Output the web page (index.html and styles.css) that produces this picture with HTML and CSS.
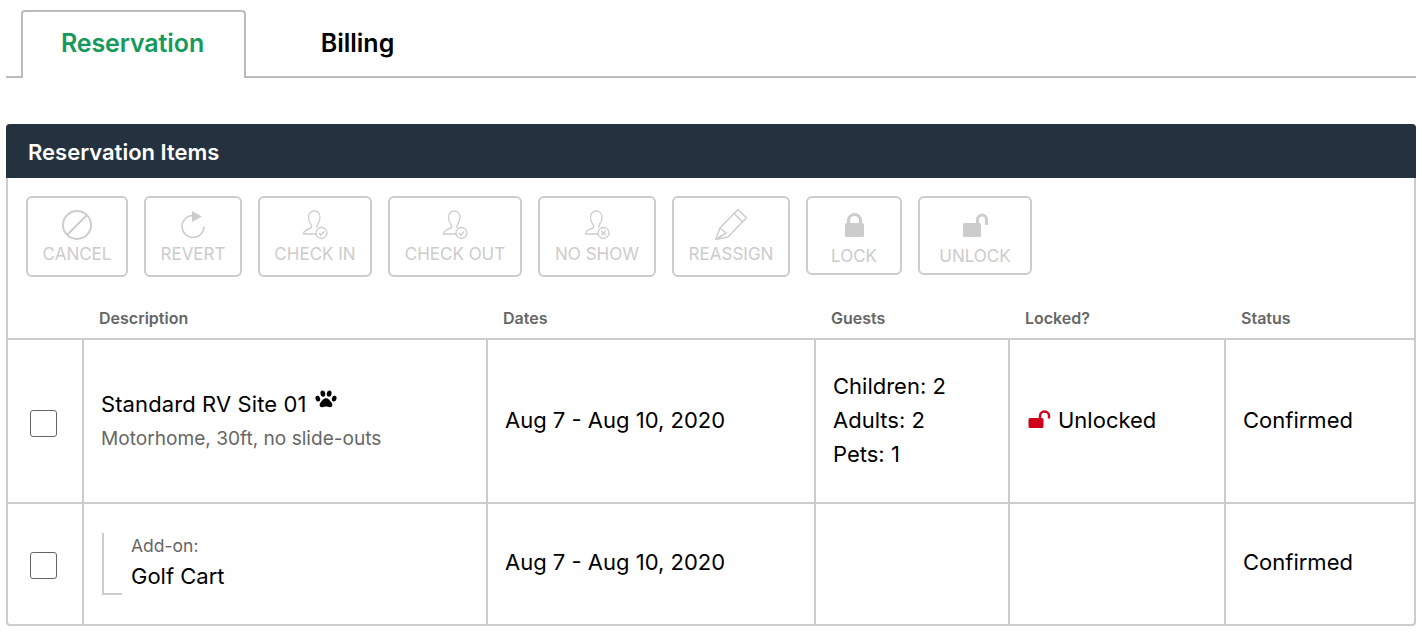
FILE: index.html
```html
<!DOCTYPE html>
<html lang="en">
<head>
<meta charset="utf-8">
<title>Reservation</title>
<link rel="stylesheet" href="styles.css">
</head>
<body>
<nav class="tabs">
  <div class="tab tab-active">Reservation</div>
  <div class="tab tab-plain">Billing</div>
</nav>
<section class="panel">
  <h2 class="panel-title">Reservation Items</h2>
  <div class="toolbar">
    <button class="tool tool-cancel"><svg class="ico" width="32" height="32" viewBox="0 0 32 32"><circle cx="16" cy="17" r="14" fill="none" stroke="currentColor" stroke-width="2"/><path d="M6 27L26 7" stroke="currentColor" stroke-width="2"/></svg>CANCEL</button>
    <button class="tool tool-revert"><svg class="ico" width="32" height="32" viewBox="0 0 32 32"><path d="M16 7.500A11 11 0 1 0 27 18.500" fill="none" stroke="currentColor" stroke-width="1.500"/><path d="M15 3l10 5.500L15 14z" fill="currentColor"/></svg>REVERT</button>
    <button class="tool tool-in"><svg class="ico" width="32" height="32" viewBox="0 0 32 32"><path d="M17 26H4.500C4.500 24 5.500 23 7 22.200L11.500 20.200C13 19.400 13 18 12 16.500 10.500 14.500 9.500 12 9.500 9 9.500 5.500 12 3 15.200 3 18.500 3 21 5.500 21 9 21 12 20 14.500 18.500 16.500 17.500 18 17.500 18.500 18 19.800" fill="none" stroke="currentColor" stroke-width="1.300"/><circle cx="22.500" cy="25" r="5.500" fill="none" stroke="currentColor" stroke-width="1.300"/><path d="M19.800 25l2 2 3.500-3.800" fill="none" stroke="currentColor" stroke-width="1.300"/></svg>CHECK IN</button>
    <button class="tool tool-out"><svg class="ico" width="32" height="32" viewBox="0 0 32 32"><path d="M17 26H4.500C4.500 24 5.500 23 7 22.200L11.500 20.200C13 19.400 13 18 12 16.500 10.500 14.500 9.500 12 9.500 9 9.500 5.500 12 3 15.200 3 18.500 3 21 5.500 21 9 21 12 20 14.500 18.500 16.500 17.500 18 17.500 18.500 18 19.800" fill="none" stroke="currentColor" stroke-width="1.300"/><circle cx="22.500" cy="25" r="5.500" fill="none" stroke="currentColor" stroke-width="1.300"/><path d="M19.800 25l2 2 3.500-3.800" fill="none" stroke="currentColor" stroke-width="1.300"/></svg>CHECK OUT</button>
    <button class="tool tool-noshow"><svg class="ico" width="32" height="32" viewBox="0 0 32 32"><path d="M17 26H4.500C4.500 24 5.500 23 7 22.200L11.500 20.200C13 19.400 13 18 12 16.500 10.500 14.500 9.500 12 9.500 9 9.500 5.500 12 3 15.200 3 18.500 3 21 5.500 21 9 21 12 20 14.500 18.500 16.500 17.500 18 17.500 18.500 18 19.800" fill="none" stroke="currentColor" stroke-width="1.300"/><circle cx="22.500" cy="25" r="5.500" fill="none" stroke="currentColor" stroke-width="1.300"/><path d="M20.200 22.700l4.600 4.600M24.800 22.700l-4.600 4.600" fill="none" stroke="currentColor" stroke-width="1.300"/></svg>NO SHOW</button>
    <button class="tool tool-reassign"><svg class="ico" width="32" height="32" viewBox="0 0 32 32"><path d="M.8 31.500L5 20 23 1.500l8.500 8.200L13 29zM5 20l6 5-8 5M19 5.500l8.500 8.200" fill="none" stroke="currentColor" stroke-width="1.500" stroke-linejoin="round"/></svg>REASSIGN</button>
    <button class="tool tool-lock"><svg class="ico" width="32" height="32" viewBox="0 0 32 32"><rect x="7" y="15" width="19" height="14" rx="1.500" fill="currentColor"/><path d="M10.500 16v-3.500a6 6 0 0 1 12 0V16" fill="none" stroke="currentColor" stroke-width="3"/></svg><span class="tool-label-low">LOCK</span></button>
    <button class="tool tool-unlock"><svg class="ico" width="32" height="32" viewBox="0 0 32 32"><rect x="4" y="15" width="18" height="14" rx="1.500" fill="currentColor"/><path d="M18.500 16v-4.500a4.500 4.500 0 0 1 9 0V17" fill="none" stroke="currentColor" stroke-width="3"/></svg><span class="tool-label-low">UNLOCK</span></button>
  </div>
  <div class="grid">
    <div class="head"></div>
    <div class="head">Description</div>
    <div class="head">Dates</div>
    <div class="head">Guests</div>
    <div class="head">Locked?</div>
    <div class="head">Status</div>

    <div class="cell cell-first row-a"><span class="check"></span></div>
    <div class="cell row-a">
      <div class="site-name">Standard RV Site 01
        <svg class="paw" width="22" height="20" viewBox="0 0 24 22"><ellipse cx="3" cy="9.500" rx="2.500" ry="3.200" transform="rotate(-18 3 9.500)"/><ellipse cx="8.500" cy="4" rx="2.600" ry="3.500" transform="rotate(-8 8.500 4)"/><ellipse cx="15.500" cy="4" rx="2.600" ry="3.500" transform="rotate(8 15.500 4)"/><ellipse cx="21" cy="9.500" rx="2.500" ry="3.200" transform="rotate(18 21 9.500)"/><path d="M12 9c3 0 4.500 3 6 4.700 1.500 1.700 1.600 5-1.600 5.300-1.800.1-2.800-.8-4.400-.8s-2.600.9-4.400.8C4.400 18.700 4.500 15.400 6 13.700 7.500 12 9 9 12 9z"/></svg>
      </div>
      <div class="site-sub">Motorhome, 30ft, no slide-outs</div>
    </div>
    <div class="cell cell-mid row-a">Aug 7 - Aug 10, 2020</div>
    <div class="cell cell-mid row-a guests"><div>Children: 2</div><div>Adults: 2</div><div>Pets: 1</div></div>
    <div class="cell cell-mid row-a"><div class="locked"><svg width="24" height="20" viewBox="0 0 24 20"><path d="M2 8h12a1.500 1.500 0 0 1 1.500 1.500v7a1.500 1.500 0 0 1-1.500 1.500H2a1.500 1.500 0 0 1-1.500-1.500v-7A1.500 1.500 0 0 1 2 8z" fill="#d0021b"/><path d="M12 8V6a4.500 4.500 0 0 1 9 0v2.500" fill="none" stroke="#d0021b" stroke-width="2.400"/></svg>Unlocked</div></div>
    <div class="cell cell-mid row-a">Confirmed</div>

    <div class="cell cell-first row-b"><span class="check"></span></div>
    <div class="cell row-b addon">
      <div class="addon-label">Add-on:</div>
      <div class="addon-name">Golf Cart</div>
    </div>
    <div class="cell cell-mid row-b">Aug 7 - Aug 10, 2020</div>
    <div class="cell row-b"></div>
    <div class="cell row-b"></div>
    <div class="cell cell-mid row-b">Confirmed</div>
  </div>
</section>
</body>
</html>
```
FILE: styles.css
```css
* { box-sizing: border-box; }
html, body { margin: 0; background: #fff; }
body {
  padding: 10px 6px 0;
  font-family: "Inter", "Liberation Sans", sans-serif;
  color: #000;
  overflow: hidden;
}
.tabs {
  display: flex;
  height: 68px;
  border-bottom: 2px solid #bbb;
  padding-left: 15px;
}
.tab {
  width: 225px;
  height: 68px;
  text-align: center;
  font-size: 25px;
  font-weight: 600;
}
.tab-active {
  color: #159a5b;
  background: #fff;
  border: 2px solid #bbb;
  border-bottom: 0;
  border-radius: 4px 4px 0 0;
  line-height: 62px;
  letter-spacing: -0.1px;
  padding-right: 2px;
}
.tab-plain {
  line-height: 66px;
  padding-right: 2px;
}
.panel {
  margin-top: 46px;
  height: 502px;
  border: 2px solid #ccc;
  border-top: 0;
  border-radius: 4px;
}
.panel-title {
  margin: 0 -2px;
  height: 54px;
  background: #243240;
  color: #fff;
  font-size: 22px;
  font-weight: 600;
  line-height: 57px;
  padding-left: 22px;
  border-radius: 4px 4px 0 0;
}
.toolbar {
  display: flex;
  align-items: flex-start;
  gap: 16px;
  padding: 18px 18px 0;
  height: 122px;
}
.tool {
  display: flex;
  flex-direction: column;
  align-items: center;
  height: 81px;
  padding: 10px 0 0;
  border: 2px solid #ccc;
  border-radius: 6px;
  background: #fff;
  color: #ccc;
  font: 400 17px/22px "Inter", sans-serif;
}
.ico { display: block; margin-bottom: 3px; }
.tool-label-low { margin-top: 2px; }
.tool-lock, .tool-unlock { height: 79px; }
.tool-cancel { width: 102px; }
.tool-revert { width: 98px; }
.tool-in { width: 114px; }
.tool-out { width: 134px; }
.tool-noshow { width: 118px; }
.tool-reassign { width: 118px; }
.tool-lock { width: 96px; }
.tool-unlock { width: 114px; }
.grid {
  display: grid;
  grid-template-columns: 74px 404px 328px 194px 216px 190px;
  grid-template-rows: 40px 164px 120px;
  font-size: 22px;
}
.head {
  padding-left: 17px;
  font-size: 16px;
  font-weight: 600;
  color: #666;
  line-height: 37px;
  border-bottom: 2px solid #ccc;
}
.cell {
  border-left: 2px solid #ccc;
  padding-left: 17px;
}
.cell-first {
  border-left: 0;
  padding-left: 22px;
  display: flex;
  align-items: center;
}
.cell-mid {
  display: flex;
  flex-direction: column;
  justify-content: center;
}
.row-a { border-bottom: 2px solid #ccc; }
.row-a.cell-mid { padding-bottom: 2px; }
.row-a.cell-first { padding-top: 4px; }
.row-b.cell-mid { padding-bottom: 4px; }
.row-b.cell-first { padding-top: 2px; }
.check {
  display: block;
  width: 27px;
  height: 27px;
  border: 1px solid #666;
  border-radius: 3px;
  background: #fff;
}
.site-name { margin-top: 50px; line-height: 28px; letter-spacing: 0.1px; }
.paw { vertical-align: 2px; margin-left: 2px; }
.site-sub { margin-top: 7px; font-size: 19.100px; color: #666; line-height: 26px; }
.guests { line-height: 34px; }
.locked { display: flex; align-items: center; gap: 6px; margin-left: 1px; }
.addon {
  position: relative;
  padding-left: 47px;
  padding-top: 30px;
}
.addon::before {
  content: "";
  position: absolute;
  left: 18px;
  top: 29px;
  width: 18px;
  height: 60px;
  border-left: 2px solid #ccc;
  border-bottom: 2px solid #ccc;
}
.addon-label { font-size: 17.500px; color: #666; line-height: 24px; }
.addon-name { margin-top: 4px; line-height: 28px; }
```
